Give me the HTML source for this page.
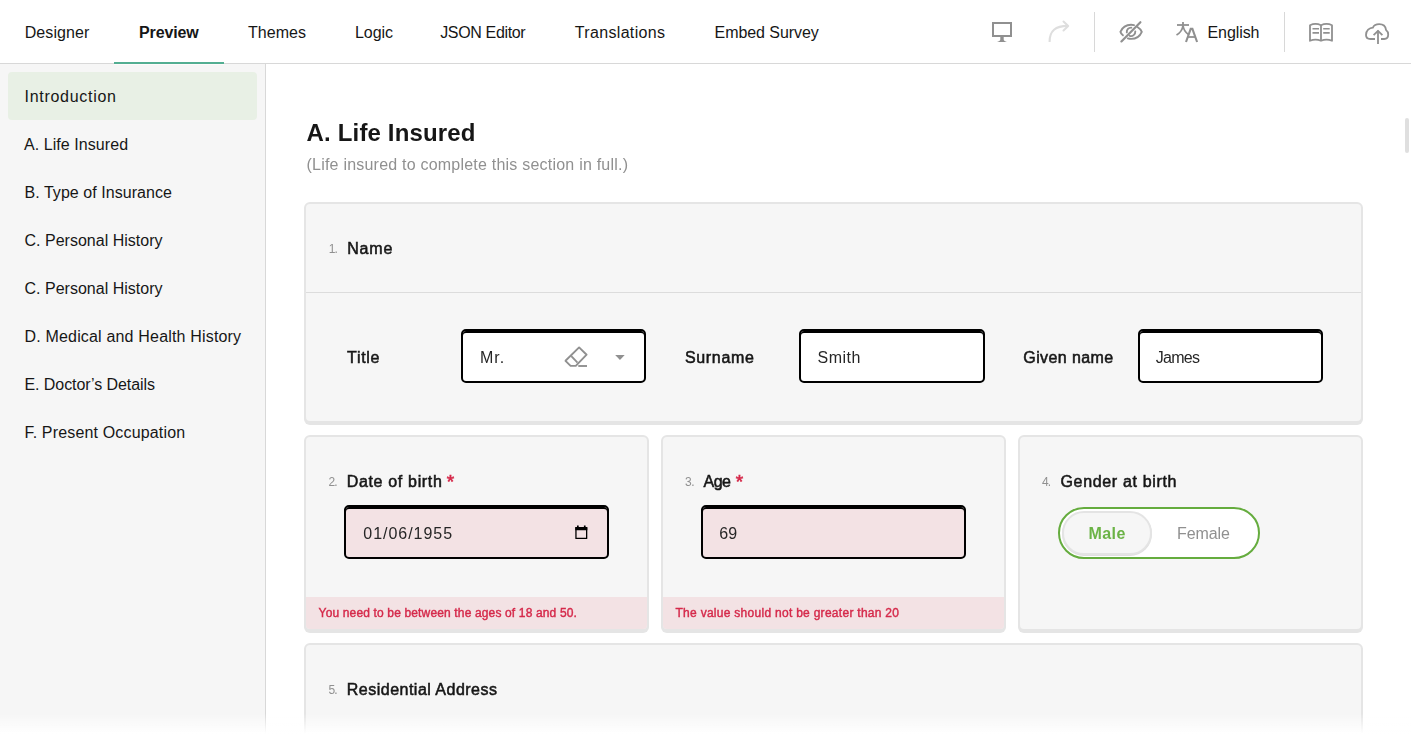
<!DOCTYPE html>
<html lang="en">
<head>
<meta charset="utf-8">
<title>Survey Creator – Preview</title>
<style>
html,body{margin:0;padding:0;}
body{width:1411px;height:736px;overflow:hidden;background:#fff;position:relative;font-family:"Liberation Sans",sans-serif;}
.abs,.t,.panel,.inp{position:absolute;box-sizing:border-box;}
.t{white-space:pre;display:block;}
.header{left:0;top:0;width:1411px;height:64px;background:#fff;border-bottom:1px solid #d8d8d8;}
.side{left:0;top:64px;width:266px;height:672px;background:#f6f6f6;border-right:1px solid #d8d8d8;}
.panel{background:#f6f6f6;border:2px solid #e5e5e5;border-radius:6px;box-shadow:0 2px 0 #e5e5e5;}
.inp{background:#fff;border:2px solid #000;border-radius:5px;box-shadow:inset 0 2px 0 #000;}
.inp.err{background:#f3e2e4;}
.errbar{background:#f3e2e4;}
svg{position:absolute;overflow:visible;}
</style>
</head>
<body>
<div class="abs header"></div>
<div class="abs" style="left:114px;top:62px;width:110px;height:2px;background:#53ae92;"></div>
<div class="abs" style="left:114px;top:64px;width:110px;height:1px;background:#fefbfb;z-index:2;"></div>
<div class="abs" style="left:1094px;top:12px;width:1px;height:40px;background:#d8d8d8;"></div>
<div class="abs" style="left:1284px;top:12px;width:1px;height:40px;background:#d8d8d8;"></div>
<div class="abs side"></div>
<div class="abs" style="left:8px;top:72px;width:249px;height:48px;background:#e8f0e5;border-radius:4px;"></div>

<!-- scrollbar thumb -->
<div class="abs" style="left:1405px;top:118px;width:4px;height:35px;background:#dfdfdf;border-radius:2px;"></div>

<!-- panels -->
<div class="panel" style="left:304px;top:202px;width:1059px;height:221px;"></div>
<div class="abs" style="left:306px;top:292px;width:1055px;height:1px;background:#dcdcdc;"></div>
<div class="panel" style="left:304px;top:435px;width:345px;height:196px;"></div>
<div class="panel" style="left:661px;top:435px;width:345px;height:196px;"></div>
<div class="panel" style="left:1018px;top:435px;width:345px;height:196px;"></div>
<div class="panel" style="left:304px;top:643px;width:1059px;height:200px;"></div>
<div class="abs errbar" style="left:306px;top:597px;width:341px;height:32px;border-radius:0 0 4px 4px;"></div>
<div class="abs errbar" style="left:663px;top:597px;width:341px;height:32px;border-radius:0 0 4px 4px;"></div>

<!-- inputs -->
<div class="inp" style="left:461px;top:329px;width:185px;height:54px;"></div>
<div class="inp" style="left:799px;top:329px;width:186px;height:54px;"></div>
<div class="inp" style="left:1138px;top:329px;width:185px;height:54px;"></div>
<div class="inp err" style="left:344px;top:505px;width:265px;height:54px;"></div>
<div class="inp err" style="left:701px;top:505px;width:265px;height:54px;"></div>

<!-- toggle -->
<div class="abs" style="left:1058px;top:507px;width:202px;height:52px;border:2px solid #65ac3e;border-radius:26px;background:#fff;"></div>
<div class="abs" style="left:1062px;top:511px;width:90px;height:44px;border:2px solid #e4e4e4;border-radius:22px;background:#f6f6f6;box-shadow:0 1px 0 #e0e0e0;"></div>

<!-- header icons -->
<svg width="1411" height="64" style="left:0;top:0" fill="none" stroke="#909090" stroke-width="2">
  <!-- monitor -->
  <rect x="993" y="23" width="18" height="13"/>
  <path d="M1000.300 37h3.400v2.600c0 1.200 1.400 1.900 3.300 2.400h-10c1.900-0.500 3.300-1.200 3.300-2.400z" fill="#909090" stroke="none"/>
  <!-- redo -->
  <g stroke="#dedede" stroke-linecap="butt">
    <path d="M1049.600 42C1049.400 31 1055.500 25.900 1067.800 25.900" stroke-width="2.100"/>
    <path d="M1063.500 21.500L1068.200 26L1063.500 30.500" stroke-linecap="round" stroke-linejoin="round"/>
  </g>
  <!-- eye slash -->
  <g stroke-width="1.900" stroke-linecap="round">
    <path d="M1122.900 35.300C1121.600 34.300 1120.700 33 1120.400 31.800C1122.300 27.400 1126.300 24.700 1131 24.700C1132.100 24.700 1133.100 24.800 1134 25.100"/>
    <path d="M1137.400 27C1139.400 28.200 1141 29.800 1141.800 31.800C1139.900 36.200 1135.900 38.900 1131.200 38.900C1130 38.900 1128.800 38.700 1127.800 38.400"/>
    <path d="M1126.800 32.400A4.300 4.300 0 0 1 1131.300 27.600"/>
    <path d="M1135.300 31.400A4.300 4.300 0 0 1 1129.700 35.850"/>
    <path d="M1121.400 41.400L1140.400 22.200" stroke-width="2.200"/>
  </g>
  <!-- translate -->
  <g stroke-width="1.800" stroke-linecap="butt">
    <path d="M1177 25h12"/>
    <path d="M1183 22v3"/>
    <path d="M1183 25.500C1182.500 29.500 1180 33 1176.500 35"/>
    <path d="M1183 25.500C1183.500 29.500 1185.500 32.500 1188.500 34.500"/>
    <path d="M1186 42L1190.700 28.900h1.700L1197.100 42" stroke-width="2.100"/>
    <path d="M1187.800 37h7.600"/>
  </g>
  <!-- book -->
  <g stroke-width="1.800" stroke-linejoin="round">
    <path d="M1310 25.200C1313.500 23.600 1317.500 23.600 1321 25.200C1324.500 23.600 1328.500 23.600 1332 25.200V40.800C1328.500 39.200 1324.500 39.200 1321 40.800C1317.500 39.200 1313.500 39.200 1310 40.800Z"/>
    <path d="M1321 25.200V40.800"/>
    <path d="M1312.500 28.700h6.500M1312.500 32.900h6.500M1323.200 28.700h6.500M1323.200 32.900h6.500" stroke-width="1.600"/>
  </g>
  <!-- cloud upload -->
  <g stroke-width="1.800" stroke-linecap="butt" stroke-linejoin="round">
    <path d="M1375 39H1370.500C1367.500 39 1366 37.300 1366 35C1366 32.800 1366.600 31 1368.100 29.600C1369.400 28.400 1371 27.700 1372.900 27.600C1373.800 25.500 1376.200 24.200 1379.200 24.200C1383 24.200 1385.600 26.500 1386 29.900C1387.400 30.900 1388.200 32.600 1388.200 34.500C1388.200 37.200 1386.600 39 1384.200 39H1381"/>
    <path d="M1378 44V30.500"/>
    <path d="M1373.600 35.200L1378 30.800L1382.400 35.200" stroke-linecap="butt"/>
  </g>
</svg>

<!-- dropdown icons -->
<svg width="100" height="40" style="left:555px;top:340px" fill="none" stroke="#909090" stroke-width="1.900" stroke-linejoin="round">
  <g transform="translate(-555,-340)">
    <path d="M579.100 347.400L586.600 354.700L575.800 365.900H570.600L565.500 360.800Z"/>
    <path d="M571.300 356.200L577.500 362.600"/>
    <path d="M578.300 366h8.700" />
    <path d="M615.200 355h9.500l-4.750 4.900z" fill="#909090" stroke="none"/>
  </g>
</svg>

<!-- calendar icon -->
<svg width="14" height="16" style="left:574.500px;top:525px">
  <path d="M0.950 2.650h10.700v10.800h-10.700z" fill="none" stroke="#000" stroke-width="1.300" stroke-linejoin="round"/>
  <rect x="0.300" y="2" width="12" height="3.200" rx="0.500" fill="#000"/>
  <rect x="2" y="0.500" width="1.700" height="2.200" fill="#000"/>
  <rect x="8.900" y="0.500" width="1.700" height="2.200" fill="#000"/>
</svg>

<span class="t" style="left:24.7px;top:25.46px;font-size:16px;line-height:16px;font-weight:400;color:#161616;letter-spacing:0.081px">Designer</span>
<span class="t" style="left:139.0px;top:25.46px;font-size:16px;line-height:16px;font-weight:700;color:#161616;letter-spacing:-0.114px">Preview</span>
<span class="t" style="left:248.0px;top:25.46px;font-size:16px;line-height:16px;font-weight:400;color:#161616;letter-spacing:0.041px">Themes</span>
<span class="t" style="left:355.0px;top:25.46px;font-size:16px;line-height:16px;font-weight:400;color:#161616;letter-spacing:-0.062px">Logic</span>
<span class="t" style="left:440.2px;top:25.46px;font-size:16px;line-height:16px;font-weight:400;color:#161616;letter-spacing:-0.342px">JSON Editor</span>
<span class="t" style="left:574.8px;top:25.46px;font-size:16px;line-height:16px;font-weight:400;color:#161616;letter-spacing:0.331px">Translations</span>
<span class="t" style="left:714.6px;top:25.46px;font-size:16px;line-height:16px;font-weight:400;color:#161616;letter-spacing:-0.067px">Embed Survey</span>
<span class="t" style="left:1207.5px;top:25.46px;font-size:16px;line-height:16px;font-weight:400;color:#161616;letter-spacing:-0.081px">English</span>
<span class="t" style="left:24.5px;top:89.46px;font-size:16px;line-height:16px;font-weight:400;color:#161616;letter-spacing:0.717px">Introduction</span>
<span class="t" style="left:24.0px;top:137.46px;font-size:16px;line-height:16px;font-weight:400;color:#161616;letter-spacing:0.066px">A. Life Insured</span>
<span class="t" style="left:24.5px;top:185.46px;font-size:16px;line-height:16px;font-weight:400;color:#161616;letter-spacing:0.049px">B. Type of Insurance</span>
<span class="t" style="left:24.5px;top:233.46px;font-size:16px;line-height:16px;font-weight:400;color:#161616;letter-spacing:0.015px">C. Personal History</span>
<span class="t" style="left:24.5px;top:281.46px;font-size:16px;line-height:16px;font-weight:400;color:#161616;letter-spacing:0.015px">C. Personal History</span>
<span class="t" style="left:24.5px;top:329.46px;font-size:16px;line-height:16px;font-weight:400;color:#161616;letter-spacing:0.177px">D. Medical and Health History</span>
<span class="t" style="left:24.5px;top:377.46px;font-size:16px;line-height:16px;font-weight:400;color:#161616;letter-spacing:-0.078px">E. Doctor’s Details</span>
<span class="t" style="left:24.5px;top:425.46px;font-size:16px;line-height:16px;font-weight:400;color:#161616;letter-spacing:0.159px">F. Present Occupation</span>
<div class="abs" style="left:0;top:0;width:1411px;height:736px;will-change:transform;">
<span class="t" style="left:306.6px;top:120.68px;font-size:24px;line-height:24px;font-weight:700;color:#161616;letter-spacing:0.158px">A. Life Insured</span>
<span class="t" style="left:306.5px;top:157.46px;font-size:16px;line-height:16px;font-weight:400;color:#909090;letter-spacing:0.218px">(Life insured to complete this section in full.)</span>
<span class="t" style="left:328.8px;top:243.34px;font-size:12px;line-height:12px;font-weight:400;color:#909090;letter-spacing:-0.916px">1.</span>
<span class="t" style="left:347.2px;top:241.46px;font-size:16px;line-height:16px;font-weight:400;-webkit-text-stroke:0.54px #161616;color:#161616;letter-spacing:0.804px">Name</span>
<span class="t" style="left:347.1px;top:350.46px;font-size:16px;line-height:16px;font-weight:400;-webkit-text-stroke:0.54px #161616;color:#161616;letter-spacing:0.665px">Title</span>
<span class="t" style="left:479.9px;top:350.46px;font-size:16px;line-height:16px;font-weight:400;color:#262626;letter-spacing:0.991px">Mr.</span>
<span class="t" style="left:684.9px;top:350.46px;font-size:16px;line-height:16px;font-weight:400;-webkit-text-stroke:0.54px #161616;color:#161616;letter-spacing:0.680px">Surname</span>
<span class="t" style="left:817.5px;top:350.46px;font-size:16px;line-height:16px;font-weight:400;color:#262626;letter-spacing:0.498px">Smith</span>
<span class="t" style="left:1023.3px;top:350.46px;font-size:16px;line-height:16px;font-weight:400;-webkit-text-stroke:0.54px #161616;color:#161616;letter-spacing:0.393px">Given name</span>
<span class="t" style="left:1155.8px;top:350.46px;font-size:16px;line-height:16px;font-weight:400;color:#262626;letter-spacing:-0.756px">James</span>
<span class="t" style="left:328.6px;top:476.34px;font-size:12px;line-height:12px;font-weight:400;color:#909090;letter-spacing:-1.116px">2.</span>
<span class="t" style="left:346.7px;top:474.46px;font-size:16px;line-height:16px;font-weight:400;-webkit-text-stroke:0.54px #161616;color:#161616;letter-spacing:0.670px">Date of birth</span>
<span class="t" style="left:446.7px;top:471.92px;font-size:19px;line-height:19px;font-weight:400;-webkit-text-stroke:0.65px #d5294a;color:#d5294a;letter-spacing:-0.006px">*</span>
<span class="t" style="left:363.3px;top:525.96px;font-size:16px;line-height:16px;font-weight:400;color:#262626;letter-spacing:0.969px">01/06/1955</span>
<span class="t" style="left:685.1px;top:476.34px;font-size:12px;line-height:12px;font-weight:400;color:#909090;letter-spacing:-0.516px">3.</span>
<span class="t" style="left:703.5px;top:474.46px;font-size:16px;line-height:16px;font-weight:400;-webkit-text-stroke:0.54px #161616;color:#161616;letter-spacing:-0.484px">Age</span>
<span class="t" style="left:735.7px;top:471.92px;font-size:19px;line-height:19px;font-weight:400;-webkit-text-stroke:0.65px #d5294a;color:#d5294a;letter-spacing:-0.006px">*</span>
<span class="t" style="left:719.3px;top:525.96px;font-size:16px;line-height:16px;font-weight:400;color:#262626;letter-spacing:0.103px">69</span>
<span class="t" style="left:1041.9px;top:476.34px;font-size:12px;line-height:12px;font-weight:400;color:#909090;letter-spacing:-0.916px">4.</span>
<span class="t" style="left:1060.5px;top:474.46px;font-size:16px;line-height:16px;font-weight:400;-webkit-text-stroke:0.54px #161616;color:#161616;letter-spacing:0.655px">Gender at birth</span>
<span class="t" style="left:1088.6px;top:525.96px;font-size:16px;line-height:16px;font-weight:700;color:#6bb346;letter-spacing:0.374px">Male</span>
<span class="t" style="left:1177.1px;top:525.96px;font-size:16px;line-height:16px;font-weight:400;color:#909090;letter-spacing:-0.092px">Female</span>
<span class="t" style="left:318.6px;top:606.84px;font-size:12px;line-height:12px;font-weight:400;-webkit-text-stroke:0.41px #d5294a;color:#d5294a;letter-spacing:0.148px">You need to be between the ages of 18 and 50.</span>
<span class="t" style="left:675.5px;top:606.84px;font-size:12px;line-height:12px;font-weight:400;-webkit-text-stroke:0.41px #d5294a;color:#d5294a;letter-spacing:0.281px">The value should not be greater than 20</span>
<span class="t" style="left:328.6px;top:684.34px;font-size:12px;line-height:12px;font-weight:400;color:#909090;letter-spacing:-1.116px">5.</span>
<span class="t" style="left:346.8px;top:682.46px;font-size:16px;line-height:16px;font-weight:400;-webkit-text-stroke:0.54px #161616;color:#161616;letter-spacing:0.488px">Residential Address</span>
</div>

<!-- bottom fade -->
<div class="abs" style="left:0;top:734px;width:1411px;height:2px;z-index:5;background:#fff;"></div>
<div class="abs" style="left:0;top:713px;width:1411px;height:21px;z-index:5;background:linear-gradient(to bottom,rgba(255,255,255,0),#fff);"></div>
</body>
</html>
